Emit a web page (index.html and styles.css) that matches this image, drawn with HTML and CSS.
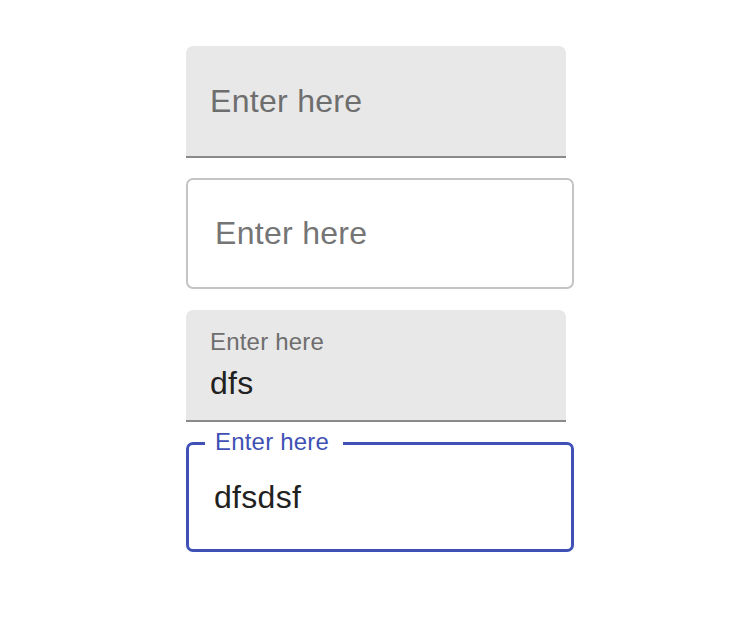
FILE: index.html
```html
<!DOCTYPE html>
<html lang="en">
<head>
    <meta charset="UTF-8">
    <meta name="viewport" content="width=device-width, initial-scale=1.0">
    <title>Text Fields</title>
    <link rel="stylesheet" href="styles.css">
</head>
<body>
    <div class="form">
        <!-- Filled, empty -->
        <div class="field filled">
            <input type="text" class="field-input" placeholder="Enter here">
        </div>

        <!-- Outlined, empty -->
        <div class="field outlined">
            <input type="text" class="field-input" placeholder="Enter here">
        </div>

        <!-- Filled, with value -->
        <div class="field filled has-value">
            <label class="field-label">Enter here</label>
            <input type="text" class="field-input" value="dfs">
        </div>

        <!-- Outlined, focused -->
        <div class="field outlined focused">
            <label class="field-label">Enter here</label>
            <input type="text" class="field-input" value="dfsdsf">
        </div>
    </div>
</body>
</html>
```

FILE: styles.css
```css
body {
    font-family: 'Liberation Sans', Arial, sans-serif;
    background-color: #ffffff;
    margin: 0;
    padding: 46px 0 0 186px;
}
.form {
    display: flex;
    flex-direction: column;
    align-items: flex-start;
}
.field {
    position: relative;
    box-sizing: border-box;
}
.field-input {
    display: block;
    width: 100%;
    height: 38px;
    margin: 0;
    padding: 0;
    border: none;
    outline: none;
    background: transparent;
    font-family: inherit;
    font-size: 32px;
    line-height: 38px;
    letter-spacing: 0.3px;
    color: #212121;
    box-sizing: content-box;
}
.field-input::placeholder {
    color: #757575;
    opacity: 1;
}
.filled .field-input::placeholder {
    color: #6e6e6e;
}
.field-label {
    display: block;
    font-size: 24px;
    line-height: 24px;
    letter-spacing: 0.2px;
    color: #6e6e6e;
}

/* filled */
.filled {
    width: 380px;
    height: 112px;
    padding: 36px 24px 36px;
    background-color: #e8e8e8;
    border-bottom: 2px solid #898989;
    border-radius: 7px 7px 0 0;
}
.filled .field-input {
    width: 332px;
}
.filled.has-value {
    margin-top: 21px;
    padding: 20px 24px 18px;
}
.filled.has-value .field-input {
    margin-top: 10px;
}

/* outlined */
.outlined {
    width: 388px;
    height: 111px;
    margin-top: 20px;
    padding: 34px 27px 35px;
    border: 2px solid #c4c4c4;
    border-radius: 7px;
}
.outlined .field-input {
    width: 330px;
}
.outlined.focused {
    height: 110px;
    padding: 33px 25px;
    border: 3px solid #3f51b5;
}
.focused .field-label {
    position: absolute;
    top: -15px;
    left: 16px;
    padding: 0 14px 0 10px;
    background-color: #ffffff;
    color: #3f51b5;
}
```
